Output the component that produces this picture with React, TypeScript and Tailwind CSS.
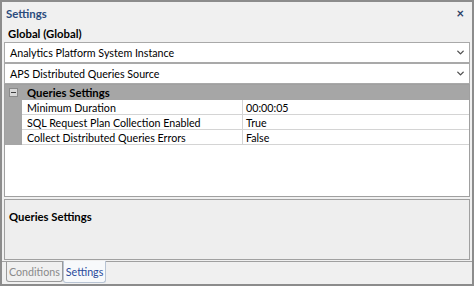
import { ChevronDown } from 'lucide-react';

const rows = [
  { name: 'Minimum Duration', value: '00:00:05' },
  { name: 'SQL Request Plan Collection Enabled', value: 'True' },
  { name: 'Collect Distributed Queries Errors', value: 'False' },
];

function Combo({ label }: { label: string }) {
  return (
    <div className="flex h-[21px] items-center justify-between border border-[#a9a9a9] bg-white pl-[5px] pr-[3px]">
      <span className="leading-[19px]">{label}</span>
      <ChevronDown className="h-[11px] w-[11px] text-[#505050]" strokeWidth={3} />
    </div>
  );
}

export default function App() {
  return (
    <div
      className="flex h-[286px] w-[474px] flex-col border-2 border-[#8c8c8c] bg-[#f0f0f0] text-[10.7px] leading-[15px] text-black"
      style={{ fontFamily: 'Lato, "Noto Sans", sans-serif' }}
    >
      {/* title */}
      <div className="flex h-[22px] items-center justify-between pl-[4px] pr-[8px]">
        <span className="text-[11.4px] font-bold text-[#2a4b7c]">Settings</span>
        <span className="text-[13px] font-bold text-[#2a3f66]">×</span>
      </div>

      <div className="flex h-[18px] items-center pl-[6px] text-[11.3px] font-bold">Global (Global)</div>

      <div className="mx-[2px] flex flex-col">
        <Combo label="Analytics Platform System Instance" />
        <Combo label="APS Distributed Queries Source" />
      </div>

      {/* property grid */}
      <div className="mx-[2px] flex h-[113px] flex-col border border-[#a0a0a0] bg-white">
        <div className="flex h-[15px] items-center bg-[#a6a6a6]">
          <div className="flex w-[17px] items-center justify-center">
            <div className="flex h-[9px] w-[9px] items-center justify-center border border-[#8a8a8a] bg-[#d8d8d8]">
              <div className="h-px w-[5px] bg-[#404040]" />
            </div>
          </div>
          <span className="pl-[5px] text-[11.3px] font-bold">Queries Settings</span>
        </div>
        {rows.map((r) => (
          <div key={r.name} className="flex h-[15px]">
            <div className="w-[17px] bg-[#a6a6a6]" />
            <div className="flex w-[221px] items-center border-b border-r border-[#d4d4d4] pl-[5px]">{r.name}</div>
            <div className="flex flex-1 items-center border-b border-[#d4d4d4] pl-[3px]">{r.value}</div>
          </div>
        ))}
      </div>

      {/* description */}
      <div className="mx-[2px] mt-[2px] h-[61px] border border-[#a0a0a0] bg-[#eeeeee] px-[4px] pt-[9px]">
        <span className="text-[11.3px] font-bold">Queries Settings</span>
      </div>

      {/* tabs */}
      <div className="mt-[1px] flex border-t border-[#a0a0a0] pl-[4px]">
        <div className="flex h-[20px] items-center rounded-b-[3px] border border-t-0 border-[#9a9a9a] bg-[#f0f0f0] px-[2px] text-[#8a8a8a]">
          Conditions
        </div>
        <div className="-mt-px flex h-[22px] items-center rounded-b-[3px] border border-t-0 border-[#b8c4d4] bg-[#f7f9fb] px-[2px] text-[#2a4b9c]">
          Settings
        </div>
      </div>
    </div>
  );
}
